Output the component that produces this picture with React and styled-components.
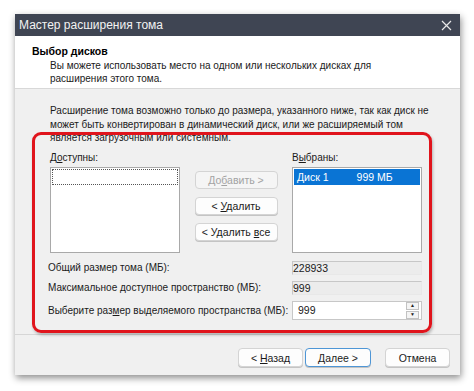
import React from 'react';
import styled, { createGlobalStyle } from 'styled-components';

const Global = createGlobalStyle`
  body {
    margin: 0;
    background: #ffffff;
    font-family: "Liberation Sans", Arial, sans-serif;
    font-size: 10px;
    color: #1a1a1a;
  }
`;

const Page = styled.div`
  width: 474px;
  height: 391px;
  padding: 14px 0 0 15px;
  box-sizing: border-box;
`;

const Dialog = styled.div`
  width: 445px;
  display: flex;
  flex-direction: column;
  background: #f0f0f0;
  box-shadow: 1px 3px 7px rgba(0, 0, 0, 0.45);
`;

const TitleBar = styled.div`
  height: 22px;
  display: flex;
  align-items: center;
  justify-content: space-between;
  padding: 0 8px 0 4px;
  background: #3f4553;
  color: #f2f2f2;
  font-size: 12px;
`;

const Header = styled.div`
  height: 53px;
  background: #fff;
  border-bottom: 1px solid #d8d8d8;
  padding: 9px 0 0 17px;
  box-sizing: border-box;
`;

const HeaderTitle = styled.div`
  font-weight: bold;
  font-size: 10.5px;
  color: #000;
  margin-bottom: 2px;
`;

const HeaderText = styled.div`
  padding-left: 18px;
  line-height: 13px;
  width: 340px;
`;

const Body = styled.div`
  height: 246px;
  padding: 15px 28px 0 17px;
  box-sizing: border-box;
  border-bottom: 1px solid #d6d6d6;
`;

const Intro = styled.p`
  margin: 0 0 0 18px;
  line-height: 13.5px;
  width: 395px;
`;

const Highlight = styled.div`
  position: relative;
  margin-top: -13px;
  height: 201px;
  box-sizing: border-box;
  border: 3px solid #e0141c;
  border-radius: 9px;
  padding: 17px 7px 0 15px;
  box-shadow: 1px 2px 3px rgba(0, 0, 0, 0.25);
`;

const Lists = styled.div`
  display: grid;
  grid-template-columns: 130px 83px 130px;
  column-gap: 13px;
  justify-content: space-between;
  align-items: start;
`;

const Column = styled.div`
  display: flex;
  flex-direction: column;
  gap: 4px;
`;

const ListBox = styled.div`
  height: 86px;
  background: #fff;
  border: 1px solid #a9a9a9;
  box-sizing: border-box;
  padding: 1px;
`;

const ListItem = styled.div`
  height: 14px;
  display: flex;
  align-items: center;
  gap: 28px;
  padding-left: 2px;
  font-size: 10.5px;
  color: ${p => (p.$selected ? '#fff' : '#000')};
  background: ${p => (p.$selected ? '#0a74d4' : 'transparent')};
  border: 1px dotted ${p => (p.$focus ? '#555' : 'transparent')};
`;

const Buttons = styled.div`
  display: flex;
  flex-direction: column;
  gap: 8px;
  padding-top: 19px;
`;

const Button = styled.button`
  height: ${p => p.$h || 18}px;
  width: ${p => p.$w || 83}px;
  padding: 0;
  font: inherit;
  font-size: 10.5px;
  border-radius: 4px;
  border: ${p => (p.$default ? '1.5px solid #4e96d6' : '1px solid #d4d4d4')};
  background: ${p => (p.$disabled ? '#f5f5f5' : '#fdfdfd')};
  color: ${p => (p.$disabled ? '#a3a3a3' : '#1a1a1a')};
  box-shadow: ${p => (p.$disabled ? 'none' : '0 1px 0 #c4c4c4')};
`;

const Fields = styled.div`
  display: grid;
  grid-template-columns: 1fr 130px;
  align-items: center;
  row-gap: 6px;
  margin-top: 8px;
  margin-left: -2px;
`;

const ReadOnly = styled.div`
  height: 14px;
  background: #ececec;
  border: 1px solid #c7c7c7;
  border-right-color: #e8e8e8;
  border-bottom-color: #e8e8e8;
  box-sizing: border-box;
  display: flex;
  align-items: center;
  font-size: 10.5px;
  line-height: 12px;
`;

const Spin = styled.div`
  height: 19px;
  background: #fff;
  border: 1px solid #c7c7c7;
  box-sizing: border-box;
  display: flex;
  align-items: center;
  justify-content: space-between;
  padding: 0 2px 0 5px;
  font-size: 10.5px;
`;

const Arrows = styled.div`
  display: flex;
  flex-direction: column;
  gap: 1px;
`;

const Arrow = styled.div`
  width: 11px;
  height: 6px;
  border: 1px solid #c2c2c2;
  background: #f4f4f4;
  display: flex;
  align-items: center;
  justify-content: center;
  font-size: 5px;
  line-height: 1;
  color: #222;
`;

const Footer = styled.div`
  height: 40px;
  display: flex;
  justify-content: flex-end;
  align-items: center;
  gap: 2px;
  padding-right: 10px;
  padding-top: 5px;
  box-sizing: border-box;
`;

const Gap = styled.span`
  width: 10px;
`;

const Close = () => (
  <svg width="11" height="11" viewBox="0 0 11 11">
    <path d="M1 1 L10 10 M10 1 L1 10" stroke="#e8e8e8" strokeWidth="1.2" />
  </svg>
);

export default function App() {
  return (
    <Page>
      <Global />
      <Dialog>
        <TitleBar>
          <span>Мастер расширения тома</span>
          <Close />
        </TitleBar>
        <Header>
          <HeaderTitle>Выбор дисков</HeaderTitle>
          <HeaderText>
            Вы можете использовать место на одном или нескольких дисках для
            расширения этого тома.
          </HeaderText>
        </Header>
        <Body>
          <Intro>
            Расширение тома возможно только до размера, указанного ниже, так как диск не
            может быть конвертирован в динамический диск, или же расширяемый том
            является загрузочным или системным.
          </Intro>
          <Highlight>
            <Lists>
              <Column>
                <span>Д<u>о</u>ступны:</span>
                <ListBox>
                  <ListItem $focus />
                </ListBox>
              </Column>
              <Buttons>
                <Button $disabled>До<u>б</u>авить &gt;</Button>
                <Button>&lt; <u>У</u>далить</Button>
                <Button>&lt; Удалить <u>в</u>се</Button>
              </Buttons>
              <Column>
                <span>В<u>ы</u>браны:</span>
                <ListBox>
                  <ListItem $selected>
                    <span>Диск 1</span>
                    <span>999 МБ</span>
                  </ListItem>
                </ListBox>
              </Column>
            </Lists>
            <Fields>
              <span>Общий размер тома (МБ):</span>
              <ReadOnly>228933</ReadOnly>
              <span>Максимальное доступное пространство (МБ):</span>
              <ReadOnly>999</ReadOnly>
              <span>Выберите раз<u>м</u>ер выделяемого пространства (МБ):</span>
              <Spin>
                <span>999</span>
                <Arrows>
                  <Arrow>▲</Arrow>
                  <Arrow>▼</Arrow>
                </Arrows>
              </Spin>
            </Fields>
          </Highlight>
        </Body>
        <Footer>
          <Button $w={65} $h={19}>&lt; <u>Н</u>азад</Button>
          <Button $w={66} $h={19} $default><u>Д</u>алее &gt;</Button>
          <Gap />
          <Button $w={65} $h={19}>Отмена</Button>
        </Footer>
      </Dialog>
    </Page>
  );
}
